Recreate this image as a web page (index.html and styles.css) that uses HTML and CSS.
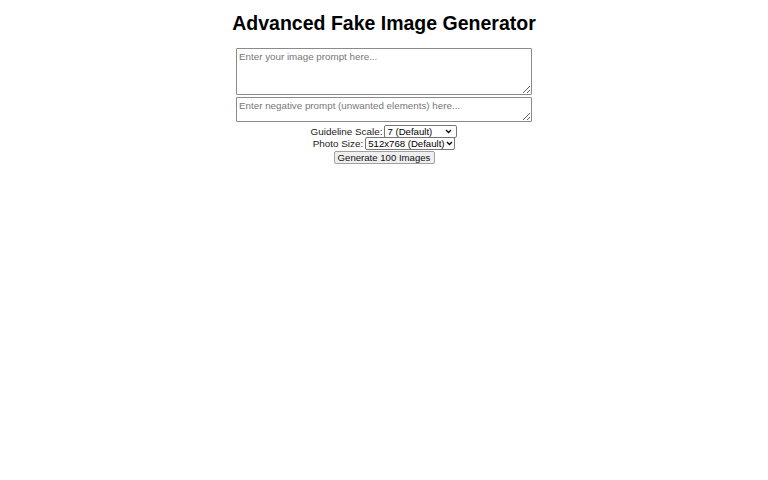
FILE: index.html
```html
<!DOCTYPE html>
<html>
<head>
<meta charset="utf-8">
<link rel="stylesheet" href="styles.css">
</head>
<body>
<div class="app">
  <h1 class="title">Advanced Fake Image Generator</h1>
  <textarea class="prompt" placeholder="Enter your image prompt here..."></textarea>
  <textarea class="negative" placeholder="Enter negative prompt (unwanted elements) here..."></textarea>
  <div class="row">
    <label>Guideline Scale:</label>
    <select class="scale">
      <option>7 (Default)</option>
    </select>
  </div>
  <div class="row">
    <label>Photo Size:</label>
    <select class="size">
      <option>512x768 (Default)</option>
    </select>
  </div>
  <button class="generate">Generate 100 Images</button>
</div>
</body>
</html>
```
FILE: styles.css
```css
html, body {
  margin: 0;
  background: #fff;
}
body {
  font-family: "Liberation Sans", Arial, sans-serif;
  font-size: 10px;
  color: #000;
}
.app {
  display: flex;
  flex-direction: column;
  align-items: center;
  padding-top: 13px;
}
.title {
  font-size: 19.5px;
  font-weight: bold;
  margin: 0 0 15px 0;
  line-height: 20px;
}
textarea {
  font-family: "Liberation Sans", Arial, sans-serif;
  font-size: 9.8px;
  width: 296px;
  box-sizing: border-box;
  margin: 0 0 2px 0;
  padding: 2px;
  border: 1px solid #8a8a8a;
  border-radius: 1px;
}
textarea::placeholder { color: #777; }
.prompt { height: 47px; }
.negative { height: 25px; margin-bottom: 3px; }
.row {
  display: flex;
  align-items: center;
  gap: 2px;
  height: 12.5px;
  font-size: 9.9px;
  color: #222;
}
select {
  -webkit-appearance: none;
  appearance: none;
  font-family: "Liberation Sans", Arial, sans-serif;
  font-size: 9.6px;
  line-height: 11px;
  height: 13px;
  padding: 0 8px 0 2px;
  background-color: #fff;
  background-image: url("data:image/svg+xml;utf8,<svg xmlns='http://www.w3.org/2000/svg' width='7' height='5' viewBox='0 0 7 5'><path d='M1 1l2.5 2.5L6 1' fill='none' stroke='black' stroke-width='1.3'/></svg>");
  background-repeat: no-repeat;
  background-position: right 1px center;
  background-size: 7px 5px;
  border: 1px solid #767676;
  border-radius: 2px;
  color: #000;
  box-sizing: border-box;
}
.scale { width: 73px; background-position: right 4px center; }
.size { width: 90px; }
.generate {
  font-family: "Liberation Sans", Arial, sans-serif;
  font-size: 9.6px;
  margin-top: 1px;
  height: 13px;
  width: 101px;
  padding: 0;
  line-height: 11px;
  background: #efefef;
  border: 1px solid #a0a0a0;
  border-radius: 2px;
  color: #111;
}
```
